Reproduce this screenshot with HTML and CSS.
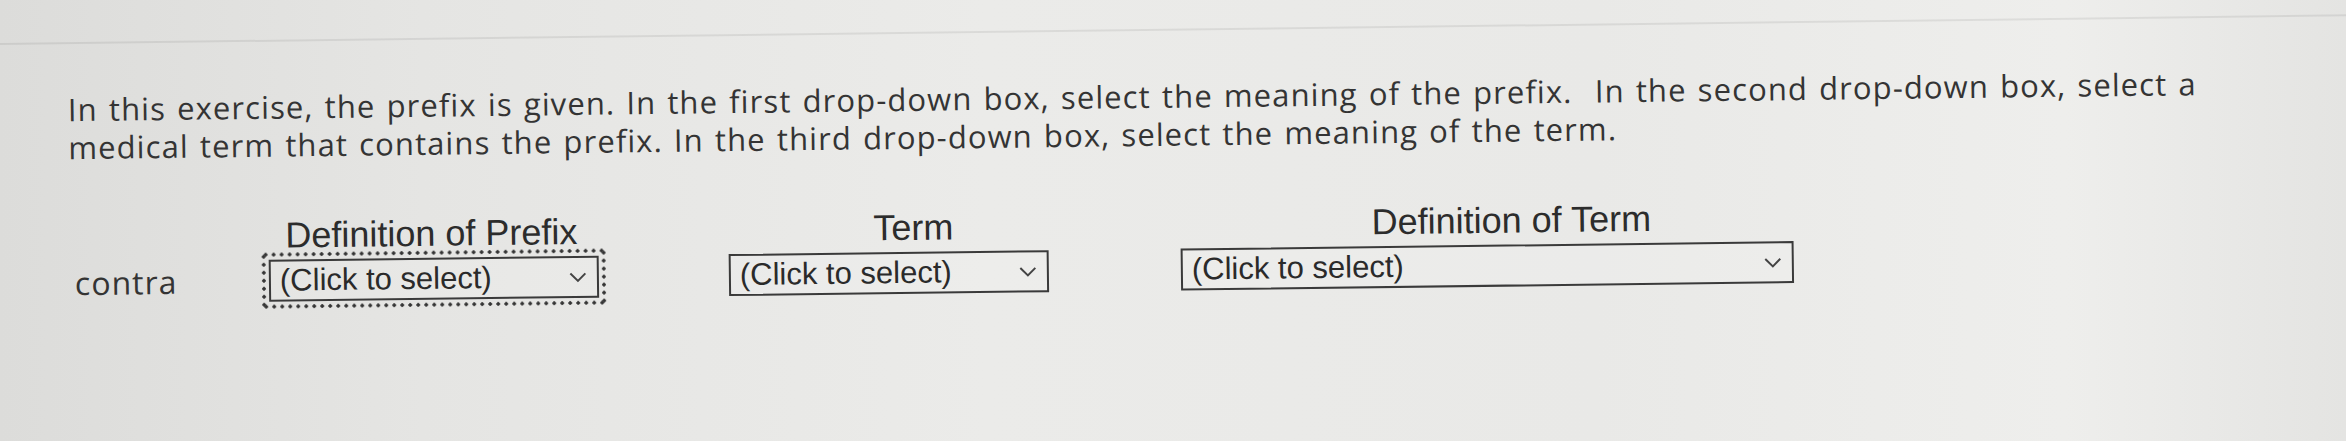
FILE: index.html
```html
<!DOCTYPE html>
<html lang="en">
<head>
  <meta charset="UTF-8">
  <title>Prefix Exercise</title>
  <link rel="stylesheet" href="styles.css">
</head>
<body>
  <div class="sheet">
    <div class="question">
      <p class="prompt">In this exercise, the prefix is given. In the first drop-down box, select the meaning of the prefix.&nbsp; In the second drop-down box, select a medical term that contains the prefix. In the third drop-down box, select the meaning of the term.</p>

      <div class="answer-row">
        <div class="word">contra</div>

        <div class="col col-prefix">
          <div class="col-label">Definition of Prefix</div>
          <div class="select-wrap focused">
            <div class="select">
              <span>(Click to select)</span>
              <svg class="chev" width="18" height="11" viewBox="0 0 18 11"><path d="M1.5 1.5 L9 9 L16.5 1.5" fill="none" stroke="#444" stroke-width="2"/></svg>
            </div>
          </div>
        </div>

        <div class="col col-term">
          <div class="col-label">Term</div>
          <div class="select-wrap">
            <div class="select">
              <span>(Click to select)</span>
              <svg class="chev" width="18" height="11" viewBox="0 0 18 11"><path d="M1.5 1.5 L9 9 L16.5 1.5" fill="none" stroke="#444" stroke-width="2"/></svg>
            </div>
          </div>
        </div>

        <div class="col col-def">
          <div class="col-label">Definition of Term</div>
          <div class="select-wrap">
            <div class="select">
              <span>(Click to select)</span>
              <svg class="chev" width="18" height="11" viewBox="0 0 18 11"><path d="M1.5 1.5 L9 9 L16.5 1.5" fill="none" stroke="#444" stroke-width="2"/></svg>
            </div>
          </div>
        </div>
      </div>
    </div>
  </div>
</body>
</html>
```

FILE: styles.css
```css
html, body {
  height: 100%;
}

body {
  margin: 0;
  overflow: hidden;
  background: linear-gradient(90deg, #dcdcda 0%, #e5e5e3 18%, #ebebe9 42%, #e9e9e7 68%, #eeeeec 88%, #e4e4e2 100%);
  font-family: 'Open Sans', 'Lato', sans-serif;
  color: #343434;
}

/* the photo is slightly tilted */
.sheet {
  transform: rotate(-0.7deg);
  transform-origin: 0 0;
  width: 2400px;
}

.question {
  margin-top: 43px;
  border-top: 2px solid rgba(0, 0, 0, 0.07);
}

.prompt {
  margin: 46px 0 0 67px;
  width: 2200px;
  font-size: 31px;
  line-height: 38px;
  letter-spacing: 1.1px;
  word-spacing: 2px;
}

.answer-row {
  display: flex;
  align-items: flex-end;
  margin-top: 55px;
  padding-left: 72px;
}

.word {
  width: 187px;
  font-size: 32px;
  line-height: 56px;
  letter-spacing: 1px;
}

.col-label {
  font-family: 'Liberation Sans', Arial, sans-serif;
  font-size: 36px;
  line-height: 34px;
  text-align: center;
  color: #2c2c2c;
}

.col-prefix {
  width: 340px;
  margin-right: 120px;
}

.col-term {
  width: 384px;
  margin-right: 68px;
}

.col-def {
  width: 676px;
}

.select-wrap {
  display: inline-block;
  padding: 7px;
}

/* focus ring drawn as a row of round dots */
.select-wrap.focused {
  background:
    radial-gradient(circle, #333 1.5px, transparent 2px) 0 0 / 8px 4px repeat-x,
    radial-gradient(circle, #333 1.5px, transparent 2px) 0 100% / 8px 4px repeat-x,
    radial-gradient(circle, #333 1.5px, transparent 2px) 0 0 / 4px 8px repeat-y,
    radial-gradient(circle, #333 1.5px, transparent 2px) 100% 0 / 4px 8px repeat-y;
}

.select {
  display: flex;
  align-items: center;
  justify-content: space-between;
  height: 38px;
  padding: 0 10px 0 9px;
  border: 2px solid #3a3a3a;
  background: rgba(255, 255, 255, 0.12);
  font-family: 'Liberation Sans', Arial, sans-serif;
  font-size: 31px;
  color: #2a2a2a;
  box-sizing: content-box;
}

.col-prefix .select { width: 307px; }
.col-term .select { width: 297px; }
.col-def .select { width: 590px; }

.chev {
  flex: none;
}
```
